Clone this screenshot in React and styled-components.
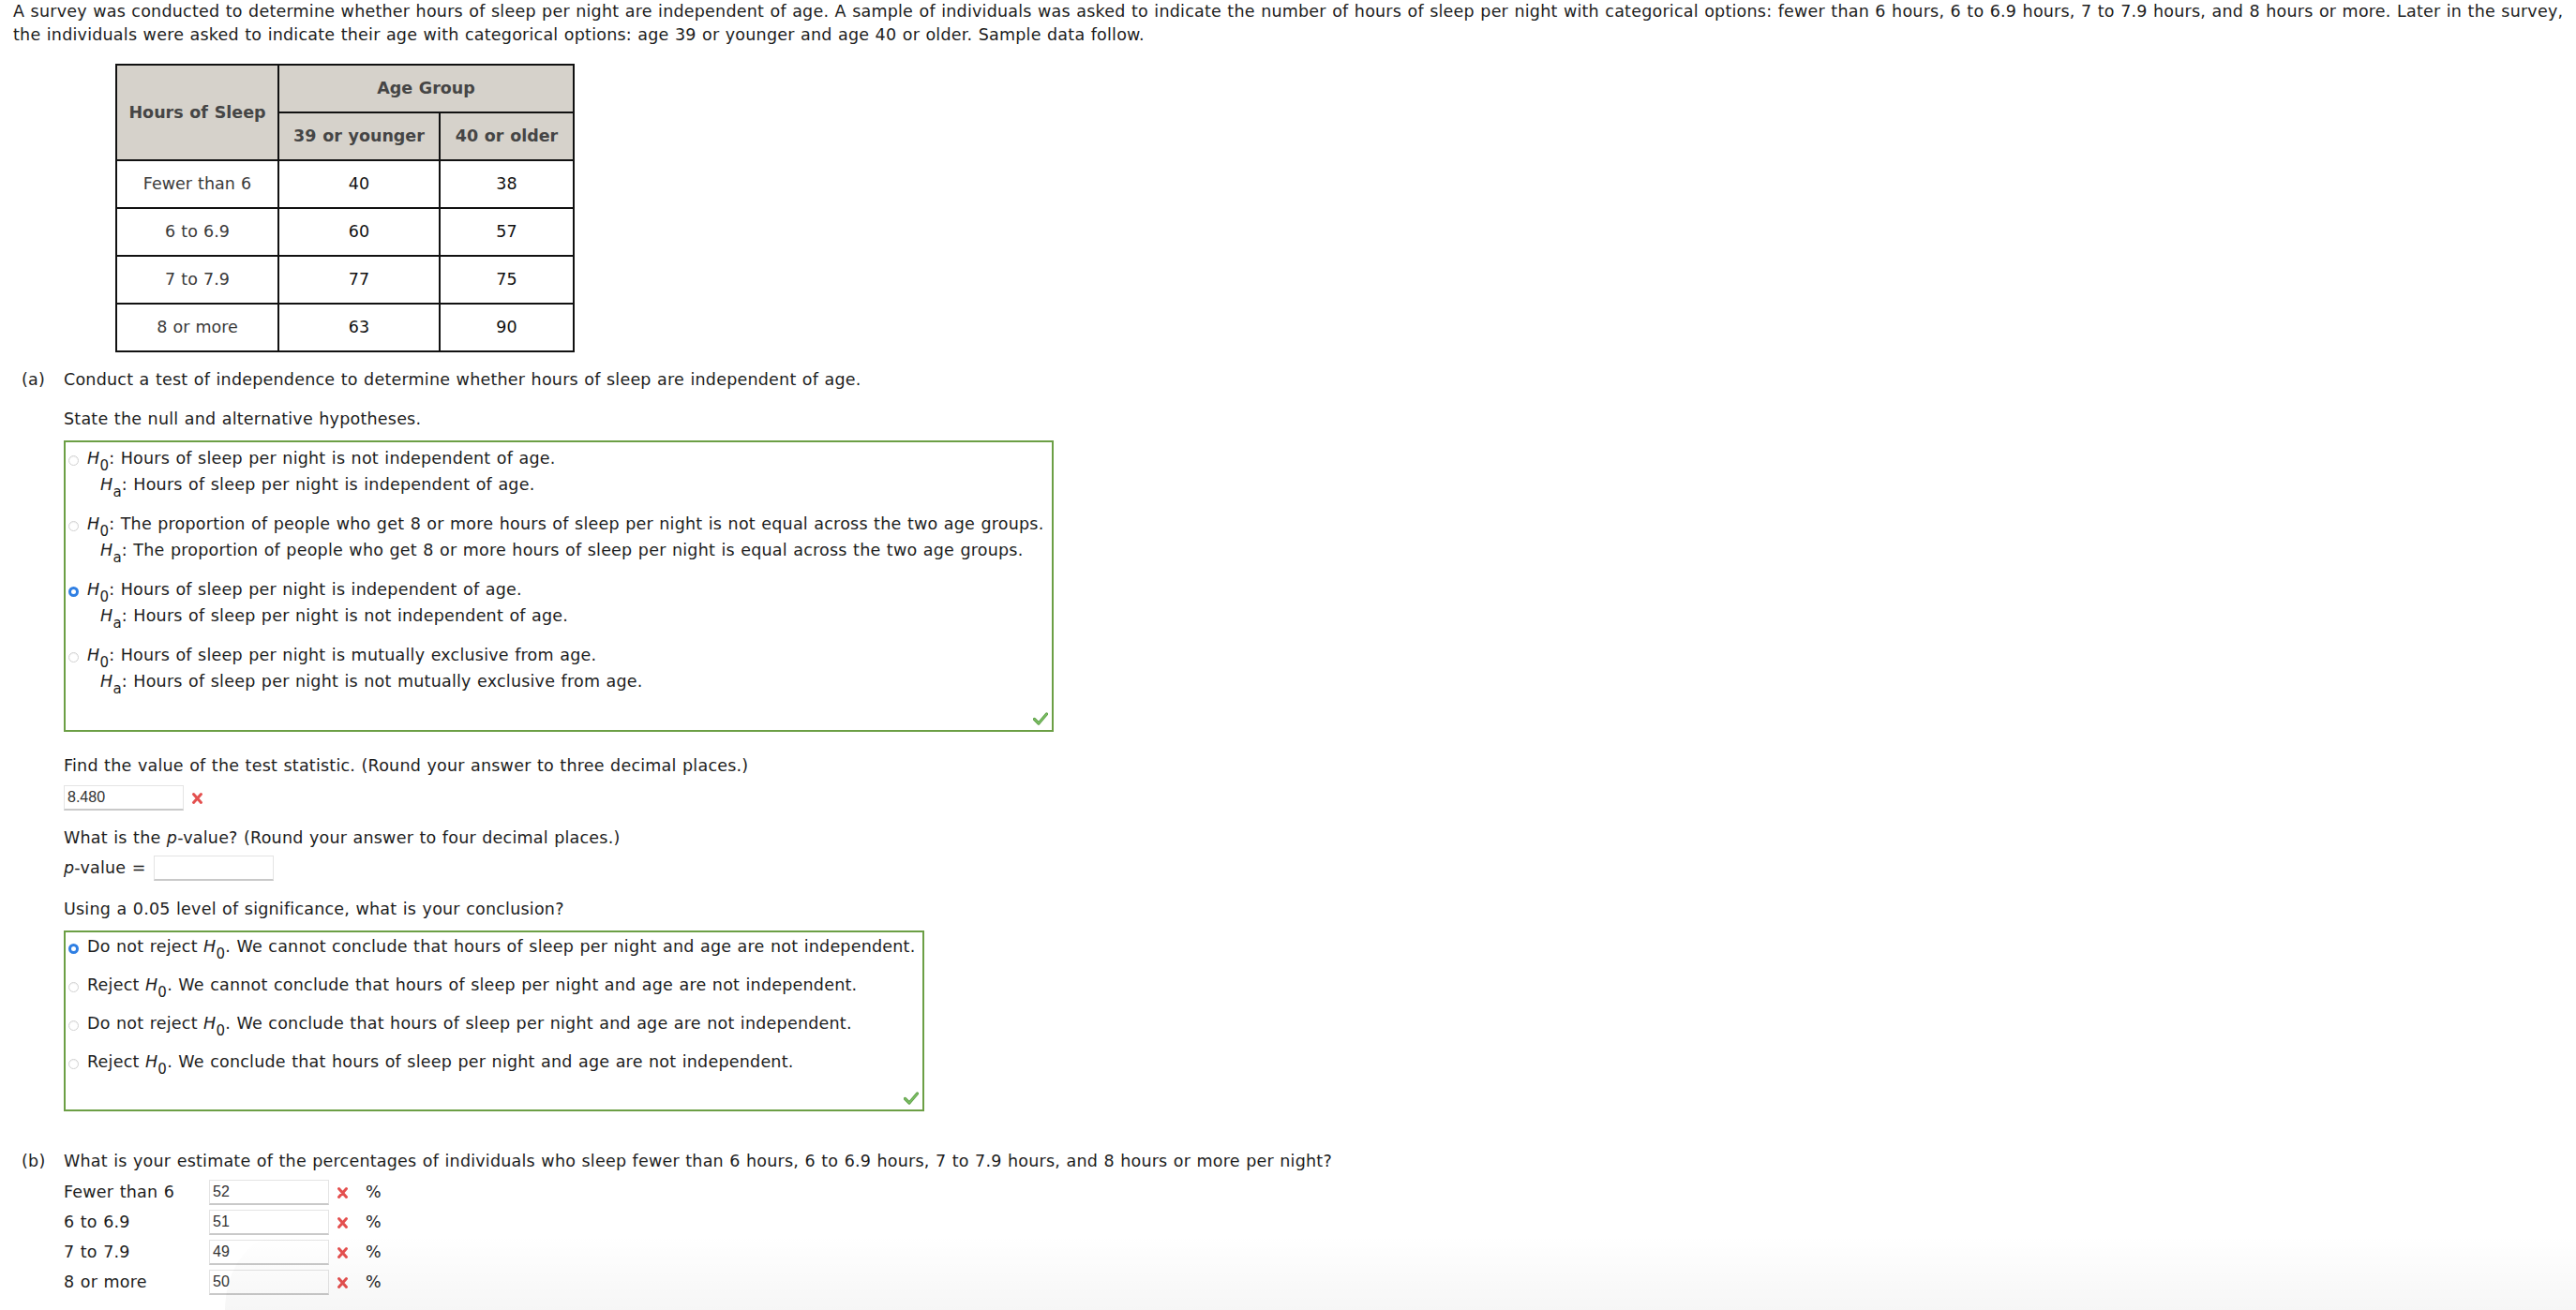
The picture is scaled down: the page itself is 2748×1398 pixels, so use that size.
import React from 'react';
import styled, { createGlobalStyle } from 'styled-components';

const Global = createGlobalStyle`
  html, body { margin: 0; padding: 0; background: #fff; }
  body {
    font-family: "DejaVu Sans", Verdana, sans-serif;
    font-size: 17.5px;
    color: #1d1d1d;
    word-spacing: 0.6px;
    letter-spacing: 0.22px;
  }
`;

const Page = styled.div`
  position: relative;
  padding: 0 2px 0 14px;
  line-height: 25px;
  min-height: 1398px;
  box-sizing: border-box;
  overflow: hidden;
`;

const BottomShade = styled.div`
  position: absolute;
  left: 240px;
  right: 0;
  bottom: 0;
  height: 80px;
  pointer-events: none;
  background: linear-gradient(to bottom, rgba(0, 0, 0, 0), rgba(0, 0, 0, 0.035));
  border-top-left-radius: 60px 80px;
`;

const Intro = styled.p`
  margin: 0;
  white-space: nowrap;
`;

const DataTable = styled.table`
  margin: 18px 0 0 109px;
  border-collapse: collapse;
  border: 2px solid #111;
  letter-spacing: 0;
`;

const HeadCell = styled.th`
  background: #d6d2cb;
  color: #454545;
  font-weight: bold;
  border: 2px solid #111;
  height: 49px;
  padding: 0;
  text-align: center;
  vertical-align: middle;
  width: ${(p) => (p.$w ? `${p.$w}px` : 'auto')};
`;

const Cell = styled.td`
  border: 2px solid #111;
  height: 49px;
  padding: 0;
  text-align: center;
  vertical-align: middle;
  color: ${(p) => (p.$label ? '#3a3a3a' : '#111')};
`;

const Section = styled.div`
  display: flex;
  margin-top: ${(p) => p.$mt}px;
`;

const SectionLabel = styled.div`
  flex: none;
  width: 45px;
  padding-left: 9px;
`;

const SectionBody = styled.div`
  flex: 1;
  display: flex;
  flex-direction: column;
  align-items: flex-start;
`;

const Prompt = styled.p`
  margin: ${(p) => p.$mt || 0}px 0 0 0;
  white-space: nowrap;
`;

const ChoiceBox = styled.div`
  margin-top: ${(p) => p.$mt}px;
  border: 2px solid #6c9f45;
  padding: ${(p) => p.$pt}px 8px 0 3px;
  display: flex;
  flex-direction: column;
  width: fit-content;
`;

const Option = styled.div`
  display: flex;
  align-items: flex-start;
  margin-bottom: ${(p) => p.$gap}px;
`;

const Radio = styled.span`
  flex: none;
  box-sizing: border-box;
  width: 11px;
  height: 11px;
  border-radius: 50%;
  margin: ${(p) => p.$mt}px 9px 0 0;
  background: #fff;
  border: ${(p) => (p.$on ? '3.5px solid #2f7fe3' : '1px solid #d2d2d2')};
  box-shadow: ${(p) => (p.$on ? 'none' : 'inset 0 1px 1px rgba(0,0,0,0.05)')};
`;

const Lines = styled.div`
  display: flex;
  flex-direction: column;
  line-height: 28px;
`;

const Line = styled.div`
  padding-left: ${(p) => (p.$indent ? 14 : 0)}px;
  white-space: nowrap;
`;

const Var = styled.i`
  font-style: italic;
`;

const Sub = styled.sub`
  font-size: 15px;
  vertical-align: -7px;
  line-height: 0;
`;

const CheckRow = styled.div`
  height: 24px;
  display: flex;
  justify-content: flex-end;
  align-items: center;
  margin-right: -4px;
`;

const AnswerRow = styled.div`
  display: flex;
  align-items: center;
  height: 27px;
  margin-top: ${(p) => p.$mt || 0}px;
`;

const AnswerInput = styled.input`
  box-sizing: border-box;
  width: 128px;
  height: 27px;
  margin: 0 0 0 ${(p) => p.$ml || 0}px;
  padding: 0 3px;
  border: 1px solid #e4e4e4;
  border-bottom: 2px solid #c9c9c9;
  background: #fff;
  font-family: "Liberation Sans", Arial, sans-serif;
  font-size: 16px;
  letter-spacing: 0;
  color: #333;
  outline: none;
`;

const Mark = styled.span`
  display: inline-flex;
  margin-left: 8px;
  width: 13px;
  justify-content: center;
`;

const Percent = styled.span`
  margin-left: 18px;
`;

const RowLabel = styled.span`
  width: 155px;
  flex: none;
`;

const PctRows = styled.div`
  display: flex;
  flex-direction: column;
  gap: 5px;
  margin-top: 7px;
`;

function H({ s }) {
  return (
    <>
      <Var>H</Var>
      <Sub>{s}</Sub>
    </>
  );
}

function XIcon() {
  return (
    <svg width="13" height="14" viewBox="0 0 13 14" aria-hidden="true">
      <path d="M2.5 2.5 L10.5 11.5 M10.5 2.5 L2.5 11.5" stroke="#e4504f" strokeWidth="3" strokeLinecap="round" />
    </svg>
  );
}

function CheckIcon() {
  return (
    <svg width="16" height="14" viewBox="0 0 16 14" aria-hidden="true">
      <path d="M1.5 7.5 L6 12 L14.5 2" fill="none" stroke="#5f9f48" strokeWidth="3.2" strokeLinecap="round" strokeLinejoin="round" />
      <path d="M1.5 7.5 L6 12 L14.5 2" fill="none" stroke="#7cc065" strokeWidth="1.4" strokeLinecap="round" strokeLinejoin="round" />
    </svg>
  );
}

const hypotheses = [
  {
    h0: 'Hours of sleep per night is not independent of age.',
    ha: 'Hours of sleep per night is independent of age.',
  },
  {
    h0: 'The proportion of people who get 8 or more hours of sleep per night is not equal across the two age groups.',
    ha: 'The proportion of people who get 8 or more hours of sleep per night is equal across the two age groups.',
  },
  {
    h0: 'Hours of sleep per night is independent of age.',
    ha: 'Hours of sleep per night is not independent of age.',
    on: true,
  },
  {
    h0: 'Hours of sleep per night is mutually exclusive from age.',
    ha: 'Hours of sleep per night is not mutually exclusive from age.',
  },
];

const conclusions = [
  { pre: 'Do not reject ', post: 'We cannot conclude that hours of sleep per night and age are not independent.', on: true },
  { pre: 'Reject ', post: 'We cannot conclude that hours of sleep per night and age are not independent.' },
  { pre: 'Do not reject ', post: 'We conclude that hours of sleep per night and age are not independent.' },
  { pre: 'Reject ', post: 'We conclude that hours of sleep per night and age are not independent.' },
];

const rows = [
  ['Fewer than 6', 40, 38],
  ['6 to 6.9', 60, 57],
  ['7 to 7.9', 77, 75],
  ['8 or more', 63, 90],
];

const pcts = [
  ['Fewer than 6', '52'],
  ['6 to 6.9', '51'],
  ['7 to 7.9', '49'],
  ['8 or more', '50'],
];

export default function App() {
  return (
    <>
      <Global />
      <Page>
        <Intro>
          A survey was conducted to determine whether hours of sleep per night are independent of age. A sample of individuals was asked to indicate the number of hours of sleep per night with categorical options: fewer than 6 hours, 6 to 6.9 hours, 7 to 7.9 hours, and 8 hours or more. Later in the survey,
          <br />
          the individuals were asked to indicate their age with categorical options: age 39 or younger and age 40 or older. Sample data follow.
        </Intro>

        <DataTable>
          <thead>
            <tr>
              <HeadCell rowSpan={2} $w={171}>Hours of Sleep</HeadCell>
              <HeadCell colSpan={2}>Age Group</HeadCell>
            </tr>
            <tr>
              <HeadCell $w={170}>39 or younger</HeadCell>
              <HeadCell $w={141}>40 or older</HeadCell>
            </tr>
          </thead>
          <tbody>
            {rows.map(([l, a, b]) => (
              <tr key={l}>
                <Cell $label>{l}</Cell>
                <Cell>{a}</Cell>
                <Cell>{b}</Cell>
              </tr>
            ))}
          </tbody>
        </DataTable>

        <Section $mt={17}>
          <SectionLabel>(a)</SectionLabel>
          <SectionBody>
            <Prompt>Conduct a test of independence to determine whether hours of sleep are independent of age.</Prompt>
            <Prompt $mt={17}>State the null and alternative hypotheses.</Prompt>
            <ChoiceBox $mt={10} $pt={3}>
              {hypotheses.map((h, i) => (
                <Option key={i} $gap={14}>
                  <Radio $on={h.on} $mt={11} />
                  <Lines>
                    <Line>
                      <H s="0" />: {h.h0}
                    </Line>
                    <Line $indent>
                      <H s="a" />: {h.ha}
                    </Line>
                  </Lines>
                </Option>
              ))}
              <CheckRow>
                <CheckIcon />
              </CheckRow>
            </ChoiceBox>

            <Prompt $mt={24}>Find the value of the test statistic. (Round your answer to three decimal places.)</Prompt>
            <AnswerRow $mt={8}>
              <AnswerInput readOnly value="8.480" />
              <Mark>
                <XIcon />
              </Mark>
            </AnswerRow>

            <Prompt $mt={17}>
              What is the <Var>p</Var>-value? (Round your answer to four decimal places.)
            </Prompt>
            <AnswerRow $mt={6}>
              <span>
                <Var>p</Var>-value =
              </span>
              <AnswerInput readOnly value="" $ml={8} />
            </AnswerRow>

            <Prompt $mt={18}>Using a 0.05 level of significance, what is your conclusion?</Prompt>
            <ChoiceBox $mt={10} $pt={1}>
              {conclusions.map((c, i) => (
                <Option key={i} $gap={13}>
                  <Radio $on={c.on} $mt={11} />
                  <Lines>
                    <Line>
                      {c.pre}
                      <H s="0" />. {c.post}
                    </Line>
                  </Lines>
                </Option>
              ))}
              <CheckRow>
                <CheckIcon />
              </CheckRow>
            </ChoiceBox>
          </SectionBody>
        </Section>

        <Section $mt={41}>
          <SectionLabel>(b)</SectionLabel>
          <SectionBody>
            <Prompt>
              What is your estimate of the percentages of individuals who sleep fewer than 6 hours, 6 to 6.9 hours, 7 to 7.9 hours, and 8 hours or more per night?
            </Prompt>
            <PctRows>
              {pcts.map(([l, v]) => (
                <AnswerRow key={l}>
                  <RowLabel>{l}</RowLabel>
                  <AnswerInput readOnly value={v} />
                  <Mark>
                    <XIcon />
                  </Mark>
                  <Percent>%</Percent>
                </AnswerRow>
              ))}
            </PctRows>
          </SectionBody>
        </Section>
        <BottomShade />
      </Page>
    </>
  );
}
